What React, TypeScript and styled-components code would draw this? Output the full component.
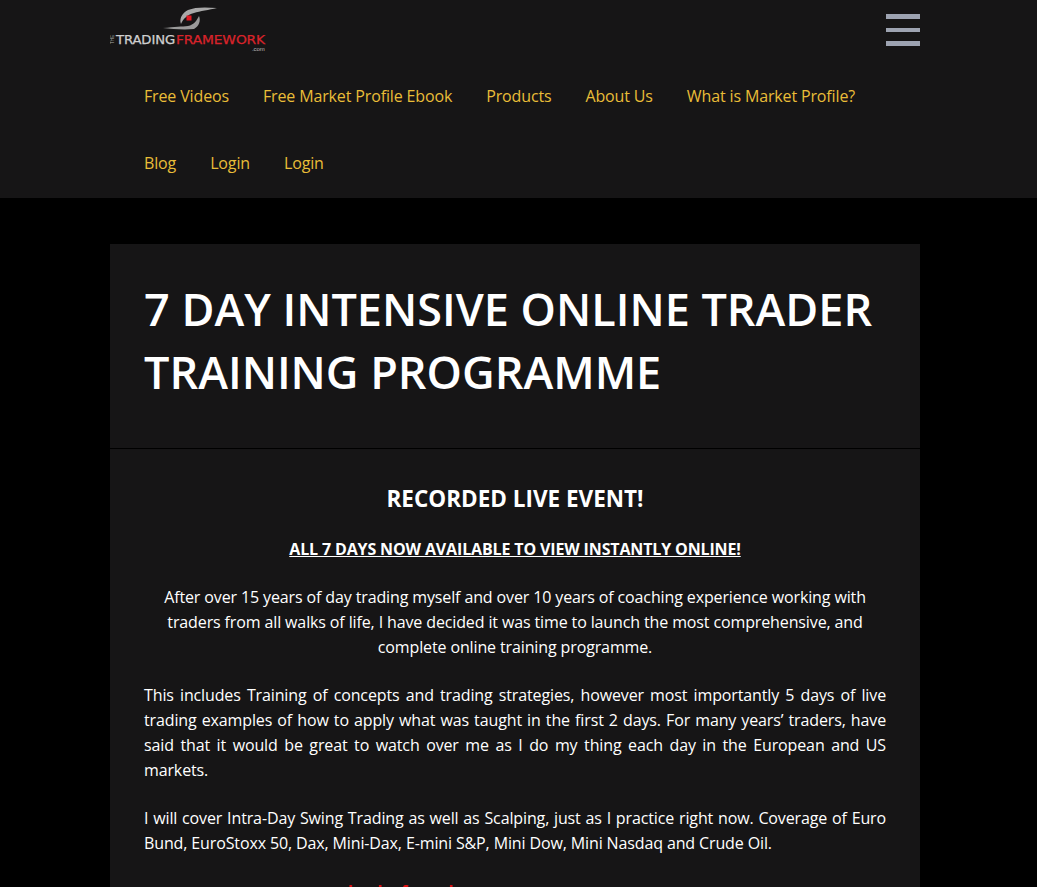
import React from 'react';
import styled, { createGlobalStyle } from 'styled-components';

const GlobalStyle = createGlobalStyle`
  html, body {
    margin: 0;
    padding: 0;
    background: #000;
    overflow: hidden;
  }
  body {
    font-family: "Open Sans", "Liberation Sans", sans-serif;
    font-size: 16px;
    line-height: 25px;
    letter-spacing: -0.125px;
    color: #fff;
  }
`;

const Header = styled.header`
  background: #161516;
  height: 198px;
`;

const HeaderInner = styled.div`
  width: 810px;
  margin-left: 110px;
`;

const TopRow = styled.div`
  display: flex;
  justify-content: space-between;
  height: 62px;
`;

const LogoWrap = styled.a`
  display: block;
  width: 160px;
  height: 56px;
`;

const Burger = styled.div`
  display: flex;
  flex-direction: column;
  gap: 9px;
  width: 34px;
  padding-top: 14px;
`;

const BurgerBar = styled.span<{ $h: number }>`
  display: block;
  height: ${(p) => p.$h}px;
  background: #9da3b1;
`;

const Nav = styled.nav`
  display: flex;
  flex-wrap: wrap;
  padding: 0 0 0 34px;
`;

const NavLink = styled.a`
  color: #e9bd38;
  font-size: 16px;
  line-height: 25px;
  letter-spacing: -0.14px;
  padding: 22px 0 20px;
  margin-right: 34px;
  height: 67px;
  box-sizing: border-box;
`;

const Card = styled.main`
  width: 810px;
  margin: 46px 0 0 110px;
  background: #161516;
`;

const TitleBlock = styled.div`
  padding: 33px 34px 45px;
  border-bottom: 1px solid #000;
`;

const Title = styled.h1`
  margin: 0;
  font-size: 45px;
  line-height: 63px;
  font-weight: 600;
  letter-spacing: 0;
  color: #fff;
`;

const Content = styled.div`
  padding: 35px 34px 0;
`;

const Lead = styled.h2`
  margin: 0 0 23px;
  font-size: 22.5px;
  line-height: 30px;
  font-weight: 700;
  letter-spacing: 0;
  text-align: center;
`;

const SubLead = styled.p`
  margin: 0 0 23px;
  font-weight: 700;
  letter-spacing: -0.14px;
  text-align: center;
  text-decoration: underline;
`;

const Para = styled.p<{ $center?: boolean }>`
  margin: 0 0 23px;
  text-align: ${(p) => (p.$center ? 'center' : 'justify')};
`;

const RedLine = styled.p`
  margin: 1px 0 0 204px;
  color: #e01010;
  font-weight: 700;
`;

const Logo = () => (
  <svg width="160" height="56" viewBox="0 0 160 56">
    <path d="M107 8 C95 7 85 7 78 10 C72 13 69 19 71 24 C73 19 77 15 84 13 C90 11 99 10 107 8 Z" fill="#a8a8a8" />
    <path d="M53 28 C65 27 72 26.5 78 26 C84 25 87 20 89 16 C91 21 89 26 84 29 C74 30 62 29 53 28 Z" fill="#9a9a9a" />
    <rect x="76.5" y="15.5" width="5" height="5" fill="#e01a22" />
    <text x="4" y="44" fontFamily="'Liberation Sans', sans-serif" fontSize="5" fill="#aaa" transform="rotate(-90 4 44)" textLength="9" lengthAdjust="spacingAndGlyphs">THE</text>
    <text x="6" y="44" fontFamily="'DejaVu Sans', sans-serif" fontSize="11.7" fill="#cfcfcf" stroke="#cfcfcf" strokeWidth="0.25" textLength="59" lengthAdjust="spacingAndGlyphs">TRADING</text>
    <text x="66" y="44" fontFamily="'DejaVu Sans', sans-serif" fontSize="11.7" fill="#d8232a" stroke="#d8232a" strokeWidth="0.25" textLength="89" lengthAdjust="spacingAndGlyphs">FRAMEWORK</text>
    <text x="142" y="51" fontFamily="'Liberation Sans', sans-serif" fontSize="6" fill="#bbb">.com</text>
  </svg>
);

const navItems = ['Free Videos', 'Free Market Profile Ebook', 'Products', 'About Us', 'What is Market Profile?', 'Blog', 'Login', 'Login'];

export default function App() {
  return (
    <>
      <GlobalStyle />
      <Header>
        <HeaderInner>
          <TopRow>
            <LogoWrap>
              <Logo />
            </LogoWrap>
            <Burger>
              <BurgerBar $h={5} />
              <BurgerBar $h={4} />
              <BurgerBar $h={5} />
            </Burger>
          </TopRow>
          <Nav>
            {navItems.map((item, i) => (
              <NavLink key={i}>{item}</NavLink>
            ))}
          </Nav>
        </HeaderInner>
      </Header>
      <Card>
        <TitleBlock>
          <Title>7 DAY INTENSIVE ONLINE TRADER TRAINING PROGRAMME</Title>
        </TitleBlock>
        <Content>
          <Lead>RECORDED LIVE EVENT!</Lead>
          <SubLead>ALL 7 DAYS NOW AVAILABLE TO VIEW INSTANTLY ONLINE!</SubLead>
          <Para $center>
            After over 15 years of day trading myself and over 10 years of coaching experience working with traders from all walks of life, I have decided it was time to launch the most comprehensive, and complete online training programme.
          </Para>
          <Para>
            This includes Training of concepts and trading strategies, however most importantly 5 days of live trading examples of how to apply what was taught in the first 2 days. For many years’ traders, have said that it would be great to watch over me as I do my thing each day in the European and US markets.
          </Para>
          <Para>
            I will cover Intra-Day Swing Trading as well as Scalping, just as I practice right now. Coverage of Euro Bund, EuroStoxx 50, Dax, Mini-Dax, E-mini S&amp;P, Mini Dow, Mini Nasdaq and Crude Oil.
          </Para>
          <RedLine>book of new lessons</RedLine>
        </Content>
      </Card>
    </>
  );
}
